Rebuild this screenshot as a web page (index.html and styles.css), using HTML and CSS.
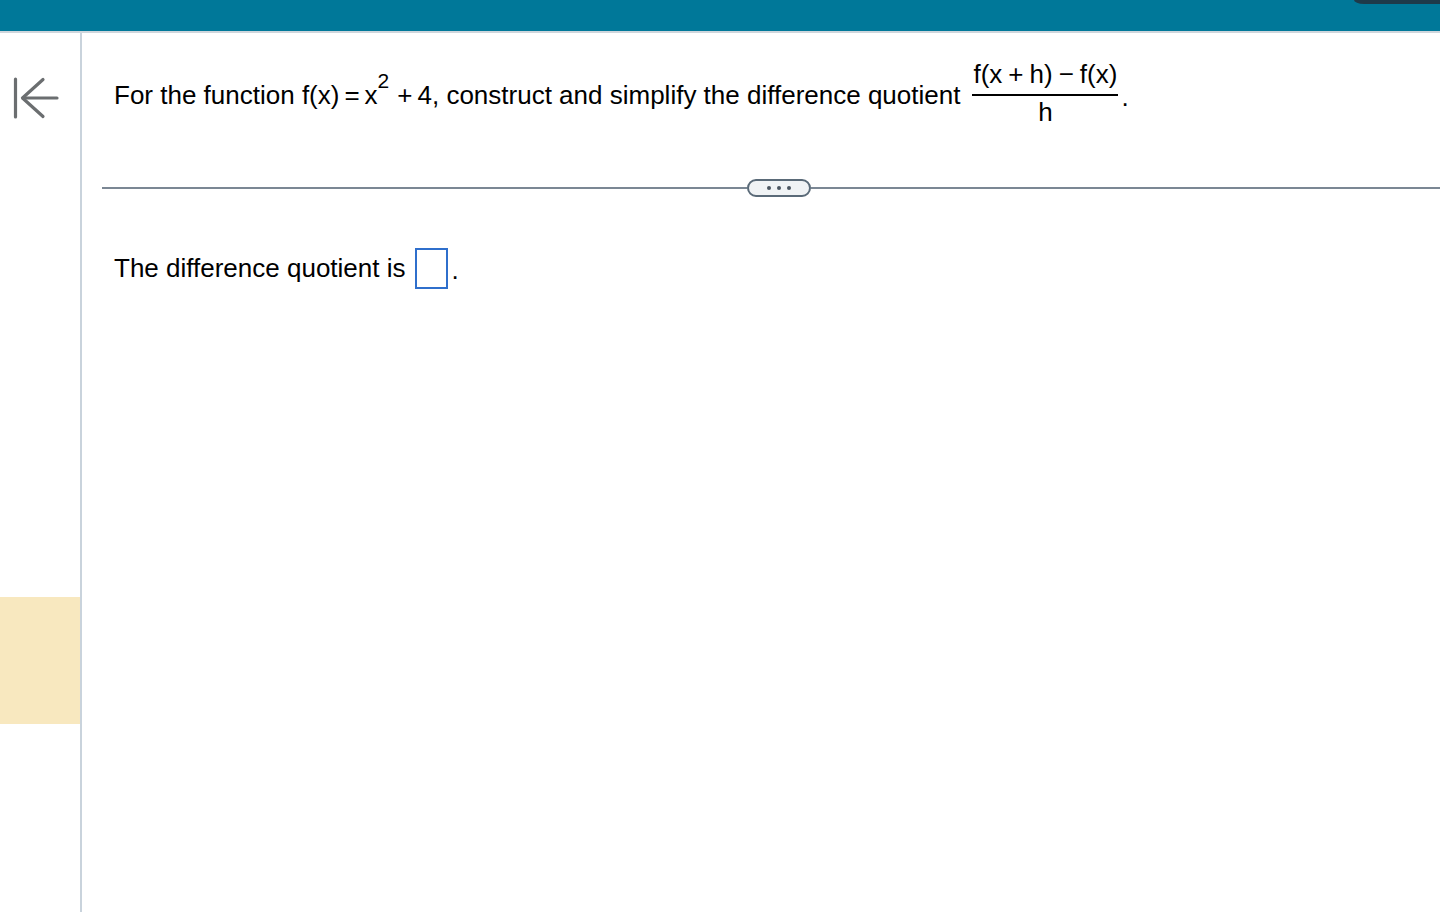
FILE: index.html
```html
<!DOCTYPE html>
<html>
<head>
<meta charset="utf-8">
<link rel="stylesheet" href="styles.css">
</head>
<body>
<header class="topbar"><div class="tab"></div></header>
<div class="layout">
  <aside class="sidebar">
    <button class="collapse" aria-label="Collapse">
      <svg width="60" height="44" viewBox="0 0 60 44">
        <line x1="15.5" y1="3" x2="15.5" y2="41" stroke="#6b6e70" stroke-width="3.2" stroke-linecap="round"/>
        <line x1="23" y1="22" x2="57" y2="22" stroke="#6b6e70" stroke-width="3.2" stroke-linecap="round"/>
        <polyline points="43,3.5 22.5,22 43,40.5" fill="none" stroke="#6b6e70" stroke-width="3.2" stroke-linecap="round" stroke-linejoin="round"/>
      </svg>
    </button>
    <div class="spacer"></div>
    <div class="current"></div>
  </aside>
  <main class="content">
    <div class="question">
      <span class="stem">For the function f(x)<span class="op">=</span>x<sup class="sup">2</sup><span class="op plus">+</span>4, construct and simplify the difference quotient</span>
      <span class="frac">
        <span class="num">f(x<span class="fop">+</span>h)<span class="fop">−</span>f(x)</span>
        <span class="den">h</span>
      </span><span class="dot">.</span>
    </div>
    <div class="divider">
      <span class="line first"></span>
      <span class="pill"><i></i><i></i><i></i></span>
      <span class="line"></span>
    </div>
    <div class="answer">
      <span class="label">The difference quotient is</span><span class="box"></span><span class="adot">.</span>
    </div>
  </main>
</div>
</body>
</html>
```
FILE: styles.css
```css
* { box-sizing: border-box; }
html, body { margin: 0; padding: 0; }
body {
  width: 1440px;
  height: 912px;
  overflow: hidden;
  font-family: "Liberation Sans", Arial, sans-serif;
  color: #000;
  background: #fff;
}
.topbar {
  height: 33px;
  background: #007899;
  border-bottom: 2px solid #cfd6dc;
  position: relative;
}
.tab {
  position: absolute;
  right: 0;
  top: 0;
  width: 86px;
  height: 4px;
  background: #1e3a4a;
  border-bottom-left-radius: 10px 4px;
}
.layout {
  display: flex;
  height: 879px;
}
.sidebar {
  width: 82px;
  flex: none;
  border-right: 2px solid #c9d3dc;
  display: flex;
  flex-direction: column;
}
.collapse {
  border: 0;
  background: none;
  padding: 0;
  margin: 43px 0 0 0;
  width: 60px;
  height: 44px;
  display: block;
}
.collapse svg { display: block; }
.spacer { height: 477px; }
.current {
  height: 127px;
  background: #f8e8bf;
}
.content {
  flex: 1;
  min-width: 0;
}
.question {
  font-size: 26px;
  padding: 0 0 0 32px;
  display: flex;
  align-items: center;
  height: 124px;
  white-space: nowrap;
}
.op { margin: 0 5px; }
.op.plus { margin: 0 5px 0 8px; }
.sup {
  font-size: 21px;
  vertical-align: 0;
  position: relative;
  top: -16px;
  line-height: 0;
}
.frac {
  display: inline-flex;
  flex-direction: column;
  align-items: center;
  margin-left: 12px;
  position: relative;
  top: -2px;
}
.num {
  padding: 0 1px 7px;
  border-bottom: 2px solid #000;
  line-height: 26px;
}
.fop { margin: 0 6px; }
.den {
  line-height: 26px;
  padding-top: 3px;
}
.dot { margin-left: 3px; position: relative; top: 2px; }
.divider {
  display: flex;
  align-items: center;
  margin: 22px 0 0 20px;
  height: 18px;
}
.divider .line {
  flex: 1;
  height: 2px;
  background: #7b8794;
}
.divider .line.first { flex: none; width: 645px; }
.pill {
  width: 64px;
  height: 18px;
  border: 2px solid #5a6a78;
  border-radius: 9px;
  background: #f0f3f5;
  display: flex;
  align-items: center;
  justify-content: center;
  gap: 6px;
}
.pill i {
  width: 4px;
  height: 4px;
  border-radius: 50%;
  background: #4a5560;
}
.answer {
  font-size: 26px;
  margin-top: 51px;
  padding-left: 32px;
  height: 41px;
  display: flex;
  align-items: center;
  white-space: nowrap;
}
.box {
  display: block;
  width: 33px;
  height: 41px;
  border: 2px solid #2f6fcc;
  margin-left: 10px;
}
.adot { margin-left: 3px; position: relative; top: 2px; }
```
